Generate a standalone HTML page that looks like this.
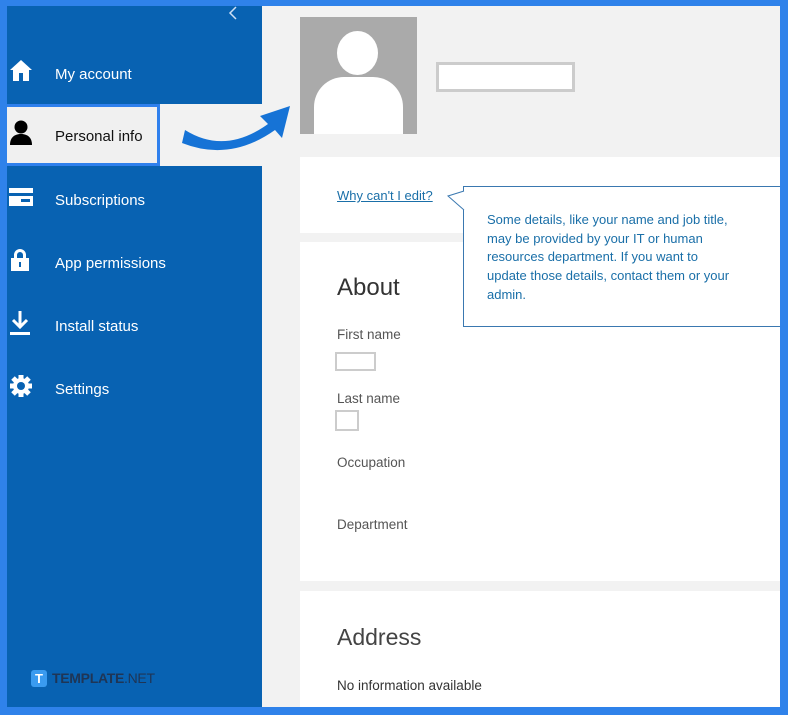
<!DOCTYPE html>
<html><head><meta charset="utf-8"><style>
*{margin:0;padding:0;box-sizing:border-box}
body{width:788px;height:715px;background:#2f82ea;position:relative;overflow:hidden;font-family:"Liberation Sans",sans-serif}
.abs{position:absolute}
.side{left:7px;top:6px;width:255px;height:701px;background:#0862b2}
.main{left:262px;top:6px;width:518px;height:701px;background:#f2f2f2}
.nav{position:absolute;left:55px;color:#fff;font-size:15px}
.ic{position:absolute;left:9px}
.card{position:absolute;left:300px;width:480px;background:#fff}
.lbl{position:absolute;left:337px;font-size:13.5px;color:#555}
</style></head><body>
<div class="abs side"></div>
<div class="abs main"></div>
<div class="abs" style="left:7px;top:104px;width:255px;height:62px;background:#f2f2f2"></div>
<div class="abs" style="left:7px;top:104px;width:153px;height:62px;background:#f0f0f0;border:3px solid #2f80ed;border-left:none"></div>
<svg class="abs" style="left:227px;top:5px" width="12" height="16"><path d="M9 2L3 8l6 6" stroke="#cfe0f5" stroke-width="1.5" fill="none"/></svg>

<svg class="ic" style="top:59px" width="24" height="24" viewBox="0 0 24 24"><path d="M12 1L1 11h3v11h6v-7h4v7h6V11h3z" fill="#fff"/><rect x="10" y="14" width="4" height="8" fill="#0862b2"/></svg>
<div class="nav" style="top:66px">My account</div>

<svg class="ic" style="top:120px" width="24" height="26" viewBox="0 0 24 26"><circle cx="12" cy="7" r="6.5" fill="#000"/><path d="M1 25c0-8 5-11 11-11s11 3 11 11z" fill="#000"/></svg>
<div class="nav" style="top:128px;color:#111">Personal info</div>

<svg class="ic" style="top:188px" width="24" height="20" viewBox="0 0 24 20"><rect x="0" y="0" width="24" height="18" fill="#fff"/><rect x="0" y="5" width="24" height="3" fill="#0862b2"/><rect x="12" y="11" width="9" height="3" fill="#0862b2"/></svg>
<div class="nav" style="top:192px">Subscriptions</div>

<svg class="ic" style="top:248px" width="22" height="24" viewBox="0 0 22 24"><path d="M5 11V7a6 6 0 0112 0v4h-3V7a3 3 0 00-6 0v4z" fill="#fff"/><rect x="2" y="10" width="18" height="13" fill="#fff"/><rect x="10" y="14" width="2" height="5" fill="#0862b2"/></svg>
<div class="nav" style="top:255px">App permissions</div>

<svg class="ic" style="top:310px" width="22" height="26" viewBox="0 0 22 26"><path d="M11 1v15M4 10l7 7 7-7" stroke="#fff" stroke-width="3" fill="none"/><rect x="1" y="22" width="20" height="3" fill="#fff"/></svg>
<div class="nav" style="top:318px">Install status</div>

<svg class="ic" style="top:374px" width="24" height="24" viewBox="0 0 24 24"><g fill="#fff"><circle cx="12" cy="12" r="8"/><g stroke="#fff" stroke-width="5"><path d="M12 1v22M1 12h22M4 4l16 16M20 4L4 20"/></g></g><circle cx="12" cy="12" r="4" fill="#0862b2"/></svg>
<div class="nav" style="top:381px">Settings</div>

<div class="abs" style="left:31px;top:670px;width:16px;height:17px;background:#3a9bf0;border-radius:3px;color:#fff;font-weight:bold;font-size:13px;text-align:center;line-height:17px">T</div>
<div class="abs" style="left:52px;top:670px;font-size:14px;color:#1f3555;font-weight:bold;letter-spacing:-0.3px">TEMPLATE<span style="font-weight:normal">.NET</span></div>

<svg class="abs" style="left:180px;top:100px" width="115" height="55" viewBox="0 0 115 55"><path d="M5 30 Q45 55 88 24 L80 16 L110 6 L102 38 L95 30 Q50 62 2 43 Z" fill="#1673d6"/></svg>

<div class="abs" style="left:300px;top:17px;width:117px;height:117px;background:#aaa;overflow:hidden">
<div class="abs" style="left:37px;top:14px;width:41px;height:44px;border-radius:50%;background:#fff"></div>
<div class="abs" style="left:14px;top:60px;width:89px;height:80px;background:#fff;border-radius:30px 30px 0 0"></div>
</div>
<div class="abs" style="left:436px;top:62px;width:139px;height:30px;border:3px solid #ccc;background:#fff"></div>

<div class="card" style="top:157px;height:76px"></div>
<div class="card" style="top:242px;height:339px"></div>
<div class="card" style="top:591px;height:116px"></div>

<div class="abs" style="left:337px;top:188px;font-size:13px;color:#1a6fa8;text-decoration:underline">Why can't I edit?</div>
<div class="abs" style="left:463px;top:186px;width:317px;height:141px;border:1px solid #3a78b0;border-right:none;background:#fff"></div>
<svg class="abs" style="left:446px;top:190px" width="20" height="24"><path d="M18 1L2 6 18 20" fill="#fff" stroke="#3a78b0"/></svg>
<div class="abs" style="left:487px;top:211px;white-space:nowrap;font-size:13px;line-height:18.7px;color:#1a6fa8">Some details, like your name and job title,<br>may be provided by your IT or human<br>resources department. If you want to<br>update those details, contact them or your<br>admin.</div>

<div class="abs" style="left:337px;top:274px;font-size:24px;color:#333">About</div>
<div class="lbl" style="top:327px">First name</div>
<div class="abs" style="left:335px;top:352px;width:41px;height:19px;border:2px solid #ccc"></div>
<div class="lbl" style="top:391px">Last name</div>
<div class="abs" style="left:335px;top:410px;width:24px;height:21px;border:2px solid #ccc"></div>
<div class="lbl" style="top:455px">Occupation</div>
<div class="lbl" style="top:517px">Department</div>

<div class="abs" style="left:337px;top:624px;font-size:23px;color:#444">Address</div>
<div class="lbl" style="top:678px;color:#333">No information available</div>
</body></html>
